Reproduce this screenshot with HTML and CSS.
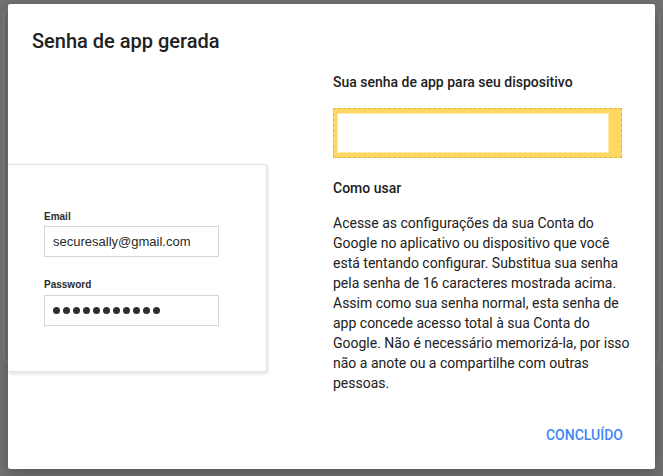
FILE: index.html
```
<!DOCTYPE html>
<html lang="pt-BR">
<head>
<meta charset="utf-8">
<title>Senha de app gerada</title>
<link rel="stylesheet" href="styles.css">
</head>
<body>
<div class="backdrop-frame"></div>
<div class="dialog">
  <h2 class="dialog-title">Senha de app gerada</h2>
  <div class="dialog-body">
    <div class="illustration">
      <div class="signin-card">
        <div class="field-label">Email</div>
        <div class="field-input">securesally@gmail.com</div>
        <div class="field-label field-label-second">Password</div>
        <div class="field-input field-dots">
          <span class="dot"></span><span class="dot"></span><span class="dot"></span><span class="dot"></span><span class="dot"></span><span class="dot"></span><span class="dot"></span><span class="dot"></span><span class="dot"></span><span class="dot"></span><span class="dot"></span>
        </div>
      </div>
    </div>
    <div class="info">
      <h3 class="info-heading">Sua senha de app para seu dispositivo</h3>
      <div class="pw-highlight"><div class="pw-field"></div></div>
      <h3 class="info-heading info-heading-usage">Como usar</h3>
      <p class="info-text">Acesse as configurações da sua Conta do Google no aplicativo ou dispositivo que você está tentando configurar. Substitua sua senha pela senha de 16 caracteres mostrada acima. Assim como sua senha normal, esta senha de app concede acesso total à sua Conta do Google. Não é necessário memorizá-la, por isso não a anote ou a compartilhe com outras pessoas.</p>
    </div>
  </div>
  <div class="dialog-footer">
    <button class="btn-done" type="button">Concluído</button>
  </div>
</div>
</body>
</html>
```

FILE: styles.css
```
* {
  box-sizing: border-box;
}

html, body {
  margin: 0;
  height: 100%;
}

body {
  background: #717171;
  padding: 4px 8px 0 8px;
  font-family: Roboto, "Noto Sans", Arial, sans-serif;
  color: #212121;
  overflow: hidden;
}

.backdrop-frame {
  position: absolute;
  left: 3px;
  top: 8px;
  width: 657px;
  height: 356px;
  border: 1px solid rgba(255, 255, 255, 0.13);
  border-radius: 8px;
}

.dialog {
  position: relative;
  width: 647px;
  height: 465px;
  background: #ffffff;
  border-radius: 2px;
  box-shadow: 0 4px 14px rgba(0, 0, 0, 0.25);
  display: flex;
  flex-direction: column;
}

.dialog-title {
  margin: 0;
  padding: 25px 24px 0 24px;
  font-size: 20px;
  line-height: 24px;
  font-weight: 500;
  color: #212121;
}

.dialog-body {
  display: flex;
  margin-top: 19px;
}

.illustration {
  width: 325px;
  flex: none;
}

.signin-card {
  margin-top: 92px;
  width: 259px;
  height: 208px;
  background: #fff;
  border: 1px solid #e3e3e3;
  border-left: none;
  box-shadow: 1px 2px 3px rgba(0, 0, 0, 0.12);
  padding: 46px 0 0 36px;
  font-family: "Liberation Sans", Arial, sans-serif;
}

.field-label {
  font-size: 10px;
  line-height: 12px;
  font-weight: 700;
  color: #2b2b2b;
  margin-bottom: 3px;
}

.field-label-second {
  margin-top: 22px;
  margin-bottom: 4px;
}

.field-input {
  width: 175px;
  height: 31px;
  border: 1px solid #d6d6d6;
  padding: 0 8px;
  display: flex;
  align-items: center;
  font-size: 13px;
  color: #2a2a2a;
}

.field-dots {
  gap: 3px;
}

.dot {
  width: 7px;
  height: 7px;
  border-radius: 50%;
  background: #2e2e2e;
  flex: none;
}

.info {
  width: 306px;
  flex: none;
}

.info-heading {
  margin: 0;
  font-size: 14px;
  line-height: 20px;
  font-weight: 500;
  color: #212121;
}

.pw-highlight {
  margin-top: 16px;
  width: 289px;
  height: 50px;
  background: #fed862;
  border: 1px dashed #e2b941;
  padding: 4px 12px 4px 3px;
}

.pw-field {
  height: 40px;
  background: #fff;
  border: 1px solid #fde9a9;
}

.info-heading-usage {
  margin-top: 20px;
}

.info-text {
  margin: 15px 0 0 0;
  font-size: 14px;
  line-height: 20px;
  color: #212121;
}

.dialog-footer {
  margin-top: auto;
  display: flex;
  justify-content: flex-end;
  padding: 0 24px 16px 24px;
}

.btn-done {
  border: none;
  background: transparent;
  font-family: Roboto, Arial, sans-serif;
  font-size: 14px;
  line-height: 20px;
  font-weight: 500;
  text-transform: uppercase;
  color: #4285f4;
  padding: 8px;
  cursor: pointer;
}
```
